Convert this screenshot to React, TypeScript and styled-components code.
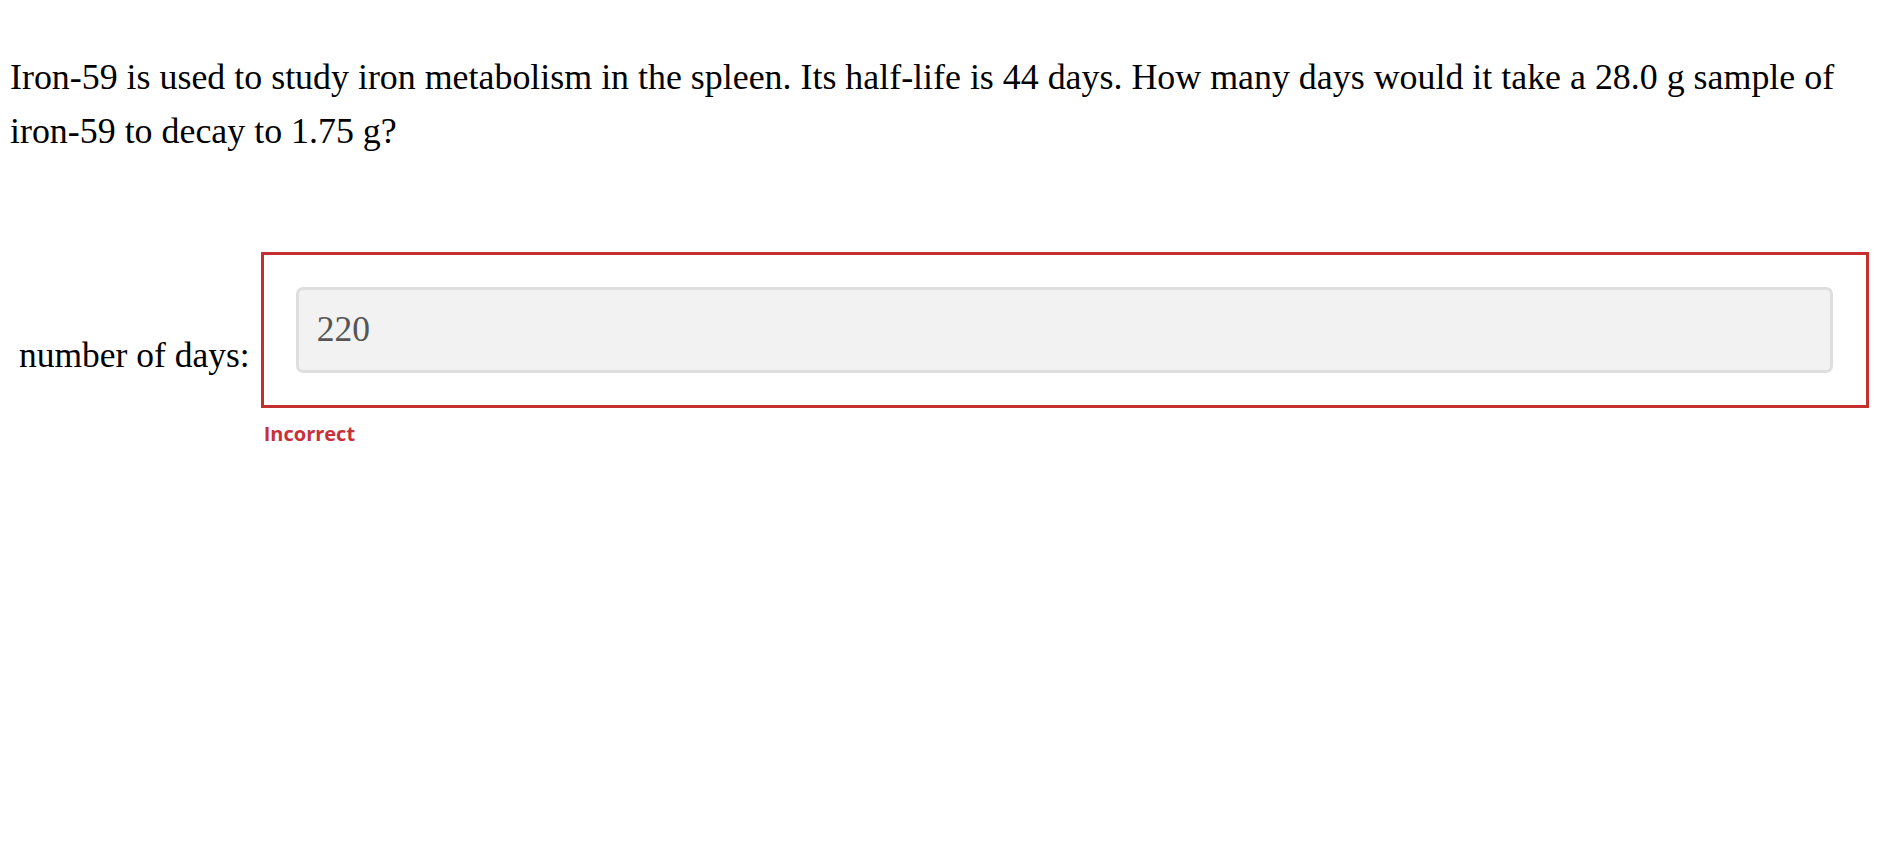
import React from "react";
import styled, { createGlobalStyle } from "styled-components";

const Global = createGlobalStyle`
  html, body { margin: 0; padding: 0; background: #fff; }
  body { font-family: "Liberation Serif", "Times New Roman", serif; color: #000; }
`;

const Page = styled.div`
  padding: 50px 10px 0 10px;
`;

const Question = styled.p`
  margin: 0;
  font-size: 35.9px;
  line-height: 54px;
`;

const AnswerRow = styled.div`
  display: flex;
  align-items: flex-start;
  margin-top: 94px;
`;

const Label = styled.label`
  font-size: 35.5px;
  line-height: 40px;
  padding: 83px 11px 0 9px;
  white-space: nowrap;
`;

const Field = styled.div`
  display: flex;
  flex-direction: column;
  flex: 1;
  margin-right: 11px;
`;

const Frame = styled.div<{ $invalid?: boolean }>`
  border: 3px solid ${(p) => (p.$invalid ? "#c42f2f" : "#ccc")};
  padding: 32px 33px 32px 32px;
`;

const Input = styled.input`
  display: block;
  width: 100%;
  box-sizing: border-box;
  height: 86px;
  border: 3px solid #dedede;
  border-radius: 7px;
  background: #f2f2f2;
  padding: 0 18px 2px;
  font-family: "Liberation Serif", "Times New Roman", serif;
  font-size: 35.5px;
  color: #555;
  outline: none;
`;

const Feedback = styled.div`
  font-family: "Open Sans", "Liberation Sans", sans-serif;
  font-weight: 700;
  font-size: 20px;
  color: #c8313a;
  margin-top: 12px;
  padding-left: 3px;
`;

export default function App() {
  return (
    <Page>
      <Global />
      <Question>
        Iron-59 is used to study iron metabolism in the spleen. Its half-life is 44 days. How many days would it take a 28.0 g sample of iron-59 to decay to 1.75 g?
      </Question>
      <AnswerRow>
        <Label htmlFor="days">number of days:</Label>
        <Field>
          <Frame $invalid>
            <Input id="days" defaultValue="220" readOnly />
          </Frame>
          <Feedback>Incorrect</Feedback>
        </Field>
      </AnswerRow>
    </Page>
  );
}
